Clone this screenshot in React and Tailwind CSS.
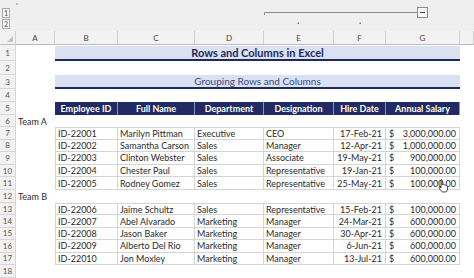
import React from 'react'

const grid = 'grid grid-cols-[16px_39px_63px_77px_69px_70px_52px_74px_14px]'

const teamA = [
  ['ID-22001', 'Marilyn Pittman', 'Executive', 'CEO', '17-Feb-21', '3,000,000.00'],
  ['ID-22002', 'Samantha Carson', 'Sales', 'Manager', '12-Apr-21', '1,000,000.00'],
  ['ID-22003', 'Clinton Webster', 'Sales', 'Associate', '19-May-21', '900,000.00'],
  ['ID-22004', 'Chester Paul', 'Sales', 'Representative', '19-Jan-21', '100,000.00'],
  ['ID-22005', 'Rodney Gomez', 'Sales', 'Representative', '25-May-21', '100,000.00'],
]

const teamB = [
  ['ID-22006', 'Jaime Schultz', 'Sales', 'Representative', '15-Feb-21', '100,000.00'],
  ['ID-22007', 'Abel Alvarado', 'Marketing', 'Manager', '24-Mar-21', '600,000.00'],
  ['ID-22008', 'Jason Baker', 'Marketing', 'Manager', '30-Apr-21', '600,000.00'],
  ['ID-22009', 'Alberto Del Rio', 'Marketing', 'Manager', '6-Jun-21', '600,000.00'],
  ['ID-22010', 'Jon Moxley', 'Marketing', 'Manager', '13-Jul-21', '600,000.00'],
]

const headers = ['Employee ID', 'Full Name', 'Department', 'Designation', 'Hire Date', 'Annual Salary']

// row number cell on the left
const RowNum = ({ n }) => (
  <div className="flex items-center justify-center bg-[#f2f2f2] border-r border-b border-[#d6d6d6] text-[8px] text-[#555]">
    {n}
  </div>
)

const DataRow = ({ n, h, row, first }) => {
  const top = first ? 'border-t' : ''
  return (
    <div className={`${grid} ${h}`}>
      <RowNum n={n} />
      <div />
      <div className={`flex items-center pl-[2px] border-l border-r border-b border-[#d4d4d4] ${top}`}>{row[0]}</div>
      <div className={`flex items-center pl-[2px] border-r border-b border-[#d4d4d4] ${top}`}>{row[1]}</div>
      <div className={`flex items-center pl-[2px] border-r border-b border-[#d4d4d4] ${top}`}>{row[2]}</div>
      <div className={`flex items-center pl-[2px] border-r border-b border-[#d4d4d4] ${top}`}>{row[3]}</div>
      <div className={`flex items-center justify-end pr-[3px] border-r border-b border-[#d4d4d4] ${top}`}>{row[4]}</div>
      <div className={`flex items-center justify-between px-[3px] border-r border-b border-[#d4d4d4] ${top}`}>
        <span>$</span>
        <span>{row[5]}</span>
      </div>
      <div />
    </div>
  )
}

const EmptyRow = ({ n, h, children }) => (
  <div className={`${grid} ${h}`}>
    <RowNum n={n} />
    <div className="flex items-center pl-[2px]">{children}</div>
  </div>
)

export default function App() {
  return (
    <div className="relative w-[474px] h-[278px] overflow-hidden bg-white font-[family-name:Lato,sans-serif] text-[9px] leading-none text-[#2b2b2b]">
      {/* outline bar */}
      <div className="relative h-[31px] bg-[#efefef]">
        <div className="flex flex-col gap-px pl-[2px] pt-[8px]">
          <div className="flex items-center justify-center w-[8px] h-[10px] border border-[#a9a9a9] bg-[#f7f7f7] text-[7px] text-[#555]">1</div>
          <div className="flex items-center justify-center w-[8px] h-[10px] border border-[#a9a9a9] bg-[#f7f7f7] text-[7px] text-[#555]">2</div>
        </div>
        <div className="absolute left-[16px] top-[3px] w-[2px] h-[2px] bg-[#bbb]" />
        <svg className="absolute left-0 top-0" width="474" height="31">
          <path d="M264.5 15 V12.5 H417" stroke="#8a8a8a" strokeWidth="1" fill="none" />
          <rect x="417.5" y="7.5" width="10" height="10" fill="#f7f7f7" stroke="#8a8a8a" />
          <path d="M420 12.5 H425" stroke="#444" strokeWidth="1" />
          <rect x="297.5" y="22.5" width="1.5" height="1.5" fill="#777" />
          <rect x="359.5" y="22.5" width="1.5" height="1.5" fill="#777" />
        </svg>
      </div>

      {/* column letters */}
      <div className={`${grid} h-[14px] bg-[#f2f2f2] border-b border-[#bdbdbd] text-[8px] text-[#444]`}>
        <div className="relative border-r border-[#d0d0d0]">
          <svg className="absolute right-[2px] bottom-[2px]" width="6" height="6">
            <path d="M6 0 V6 H0 Z" fill="#c2c2c2" />
          </svg>
        </div>
        {['A', 'B', 'C', 'D', 'E', 'F', 'G', ''].map((c, i) => (
          <div key={i} className="flex items-center justify-center border-r border-[#d0d0d0]">{c}</div>
        ))}
      </div>

      {/* row 1 title */}
      <div className={`${grid} h-[16px]`}>
        <RowNum n={1} />
        <div />
        <div className="col-span-6 flex items-center justify-center mt-[1px] bg-[#d9e1f2] border-b-2 border-[#1f2a5c] text-[11px] font-bold text-[#1f2a5c]">
          Rows and Columns in Excel
        </div>
      </div>

      <EmptyRow n={2} h="h-[14px]" />

      {/* row 3 subtitle */}
      <div className={`${grid} h-[14px]`}>
        <RowNum n={3} />
        <div />
        <div className="col-span-6 flex items-center justify-center bg-[#d9e1f2] border-b-2 border-[#1f2a5c] text-[10px] text-[#3b4a7c]">
          Grouping Rows and Columns
        </div>
      </div>

      <EmptyRow n={4} h="h-[13px]" />

      {/* row 5 table header */}
      <div className={`${grid} h-[13px]`}>
        <RowNum n={5} />
        <div />
        {headers.map((t) => (
          <div key={t} className="flex items-center justify-center bg-[#212a62] border-r border-[#8d93b8] text-white font-bold text-[9px]">
            {t}
          </div>
        ))}
      </div>

      <EmptyRow n={6} h="h-[12px]">Team A</EmptyRow>
      {teamA.map((r, i) => (
        <DataRow key={r[0]} n={7 + i} h="h-[12.6px]" row={r} first={i === 0} />
      ))}
      <EmptyRow n={12} h="h-[13px]">Team B</EmptyRow>
      {teamB.map((r, i) => (
        <DataRow key={r[0]} n={13 + i} h="h-[12.4px]" row={r} first={i === 0} />
      ))}
      <EmptyRow n={18} h="h-[13px]" />

      {/* mouse pointer */}
      <svg className="absolute left-[438px] top-[179px]" width="11" height="14" viewBox="0 0 11 14">
        <path d="M3 1 C3 0.4 4 0.4 4 1 V6 L4.5 5.5 C5 5 6 5.3 6 6 L6.5 5.8 C7 5.6 7.8 5.9 7.8 6.5 L8.2 6.4 C8.8 6.3 9.5 6.7 9.5 7.3 V10 C9.5 12 8.5 13 7 13 H5 C4 13 3.4 12.5 2.8 11.6 L1 8.5 C0.7 8 1.3 7.4 1.9 7.8 L3 9 Z" fill="#fff" stroke="#222" strokeWidth="0.8" />
      </svg>
    </div>
  )
}
